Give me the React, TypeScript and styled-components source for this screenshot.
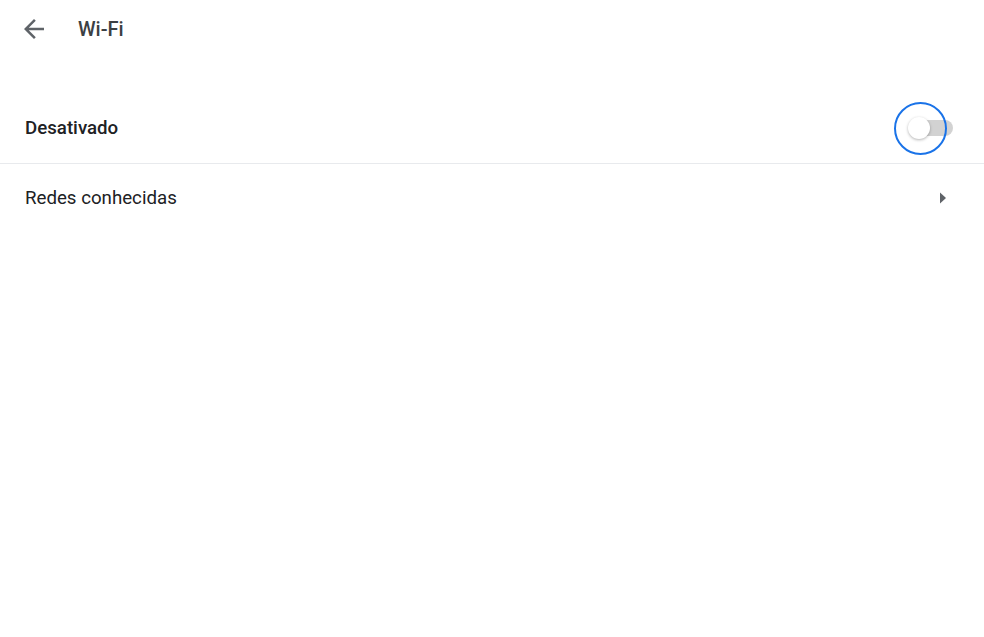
import React from "react";
import styled, { createGlobalStyle } from "styled-components";

const Global = createGlobalStyle`
  html, body { margin: 0; padding: 0; background: #fff; }
  body { font-family: Roboto, "Noto Sans", sans-serif; color: #202124; }
`;

const Page = styled.div`
  width: 984px;
  height: 637px;
  background: #fff;
  display: flex;
  flex-direction: column;
`;

const Header = styled.div`
  height: 58px;
  display: flex;
  align-items: center;
  padding-left: 19px;
`;

const BackButton = styled.button`
  width: 30px;
  height: 30px;
  padding: 0;
  border: none;
  background: none;
  display: flex;
  align-items: center;
  justify-content: center;
  color: #5f6368;
  margin-right: 29px;
`;

const Title = styled.h1`
  margin: 0;
  font-size: 20px;
  font-weight: 500;
  color: #3c4043;
`;

const ToggleRow = styled.div`
  margin-top: 35px;
  height: 70px;
  display: flex;
  align-items: center;
  justify-content: space-between;
  padding: 0 31px 0 25px;
  border-bottom: 1px solid #e8eaed;
`;

const Label = styled.span<{ $bold?: boolean }>`
  font-size: 18.7px;
  font-weight: ${(p) => (p.$bold ? 500 : 400)};
  color: #202124;
`;

const Switch = styled.div`
  position: relative;
  width: 42px;
  height: 16px;
  border-radius: 8px;
  background: #d2d2d2;
`;

const Knob = styled.div`
  position: absolute;
  left: -3px;
  top: -3px;
  width: 22px;
  height: 22px;
  border-radius: 50%;
  background: #fff;
  box-shadow: 0 1px 3px rgba(0, 0, 0, 0.3);
`;

const FocusRing = styled.div`
  position: absolute;
  left: -17px;
  top: -18px;
  width: 49px;
  height: 49px;
  border-radius: 50%;
  border: 2.5px solid #1a73e8;
`;

const LinkRow = styled.div`
  height: 68px;
  display: flex;
  align-items: center;
  justify-content: space-between;
  padding: 0 37px 0 25px;
`;

export default function App() {
  return (
    <>
      <Global />
      <Page>
        <Header>
          <BackButton aria-label="Voltar">
            <svg width="30" height="30" viewBox="0 0 24 24" fill="currentColor">
              <path d="M20 11H7.83l5.59-5.59L12 4l-8 8 8 8 1.41-1.41L7.83 13H20v-2z" />
            </svg>
          </BackButton>
          <Title>Wi-Fi</Title>
        </Header>
        <ToggleRow>
          <Label $bold>Desativado</Label>
          <Switch>
            <FocusRing />
            <Knob />
          </Switch>
        </ToggleRow>
        <LinkRow>
          <Label>Redes conhecidas</Label>
          <svg width="8" height="12" viewBox="0 0 8 12" fill="#5f6368">
            <path d="M1 0.5l6 5.5-6 5.5z" />
          </svg>
        </LinkRow>
      </Page>
    </>
  );
}
